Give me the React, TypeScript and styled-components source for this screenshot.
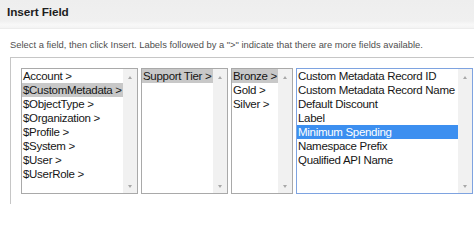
import React from "react";
import styled, { createGlobalStyle } from "styled-components";

const Global = createGlobalStyle`
  html, body { margin: 0; padding: 0; background: #ffffff; }
  body { font-family: "Liberation Sans", Arial, sans-serif; color: #222; overflow: hidden; }
`;

const Page = styled.div`
  width: 474px;
  height: 205px;
  overflow: hidden;
`;

const Header = styled.div`
  height: 29px;
  box-sizing: border-box;
  padding: 5px 0 0 7px;
  background: linear-gradient(#eeeeee 0%, #f0f0f0 75%, #f8f8f8 88%, #f3f3f3 100%);
  border-bottom: 1px solid #ececec;
`;

const Title = styled.div`
  font-size: 11.8px;
  line-height: 14px;
  font-weight: bold;
  letter-spacing: -0.1px;
  color: #1e1e1e;
`;

const Instructions = styled.div`
  margin-top: 10px;
  padding-left: 10px;
  font-size: 9.4px;
  line-height: 12px;
  color: #505050;
  white-space: nowrap;
`;

const FieldBox = styled.div`
  margin: 6px 0 0 10px;
  height: 147px;
  border-top: 1px solid #c6c6c6;
  border-left: 1px solid #c6c6c6;
  padding: 10px 0 0 10px;
  box-sizing: border-box;
`;

const Lists = styled.div`
  display: flex;
  gap: 3px;
`;

const ListBox = styled.div<{ $w: number; $focused?: boolean }>`
  width: ${(p) => p.$w}px;
  height: 126px;
  box-sizing: border-box;
  border: 1px solid ${(p) => (p.$focused ? "#7ea3e0" : "#a9a9a9")};
  display: flex;
  background: #fff;
`;

const Items = styled.div`
  flex: 1;
  min-width: 0;
  overflow: hidden;
`;

const Row = styled.div<{ $sel?: "grey" | "blue" }>`
  height: 14px;
  line-height: 14px;
  font-size: 11.5px;
  letter-spacing: -0.3px;
  padding-left: 1px;
  white-space: nowrap;
  color: ${(p) => (p.$sel === "blue" ? "#fff" : "#161616")};
  background: ${(p) =>
    p.$sel === "blue" ? "#3c8ff0" : p.$sel === "grey" ? "#c8c8c8" : "transparent"};
`;

const Scrollbar = styled.div`
  width: 14px;
  flex: none;
  background: #f1f1f1;
  display: flex;
  flex-direction: column;
  justify-content: space-between;
  align-items: center;
  padding: 7px 0 5px;
  box-sizing: border-box;
`;

const Arrow = styled.div<{ $down?: boolean }>`
  width: 0;
  height: 0;
  border-left: 2.5px solid transparent;
  border-right: 2.5px solid transparent;
  ${(p) =>
    p.$down
      ? "border-top: 3px solid #a8a8a8;"
      : "border-bottom: 3px solid #a8a8a8;"}
`;

type Item = { label: string; sel?: "grey" | "blue" };

const List = ({ w, items, focused }: { w: number; items: Item[]; focused?: boolean }) => (
  <ListBox $w={w} $focused={focused}>
    <Items>
      {items.map((it) => (
        <Row key={it.label} $sel={it.sel}>
          {it.label}
        </Row>
      ))}
    </Items>
    <Scrollbar>
      <Arrow />
      <Arrow $down />
    </Scrollbar>
  </ListBox>
);

const list1: Item[] = [
  { label: "Account >" },
  { label: "$CustomMetadata >", sel: "grey" },
  { label: "$ObjectType >" },
  { label: "$Organization >" },
  { label: "$Profile >" },
  { label: "$System >" },
  { label: "$User >" },
  { label: "$UserRole >" },
];

const list2: Item[] = [{ label: "Support Tier >", sel: "grey" }];

const list3: Item[] = [
  { label: "Bronze >", sel: "grey" },
  { label: "Gold >" },
  { label: "Silver >" },
];

const list4: Item[] = [
  { label: "Custom Metadata Record ID" },
  { label: "Custom Metadata Record Name" },
  { label: "Default Discount" },
  { label: "Label" },
  { label: "Minimum Spending", sel: "blue" },
  { label: "Namespace Prefix" },
  { label: "Qualified API Name" },
];

export default function App() {
  return (
    <Page>
      <Global />
      <Header>
        <Title>Insert Field</Title>
      </Header>
      <Instructions>
        Select a field, then click Insert. Labels followed by a "&gt;" indicate that there are more fields available.
      </Instructions>
      <FieldBox>
        <Lists>
          <List w={117} items={list1} />
          <List w={87} items={list2} />
          <List w={62} items={list3} />
          <List w={177} items={list4} focused />
        </Lists>
      </FieldBox>
    </Page>
  );
}
